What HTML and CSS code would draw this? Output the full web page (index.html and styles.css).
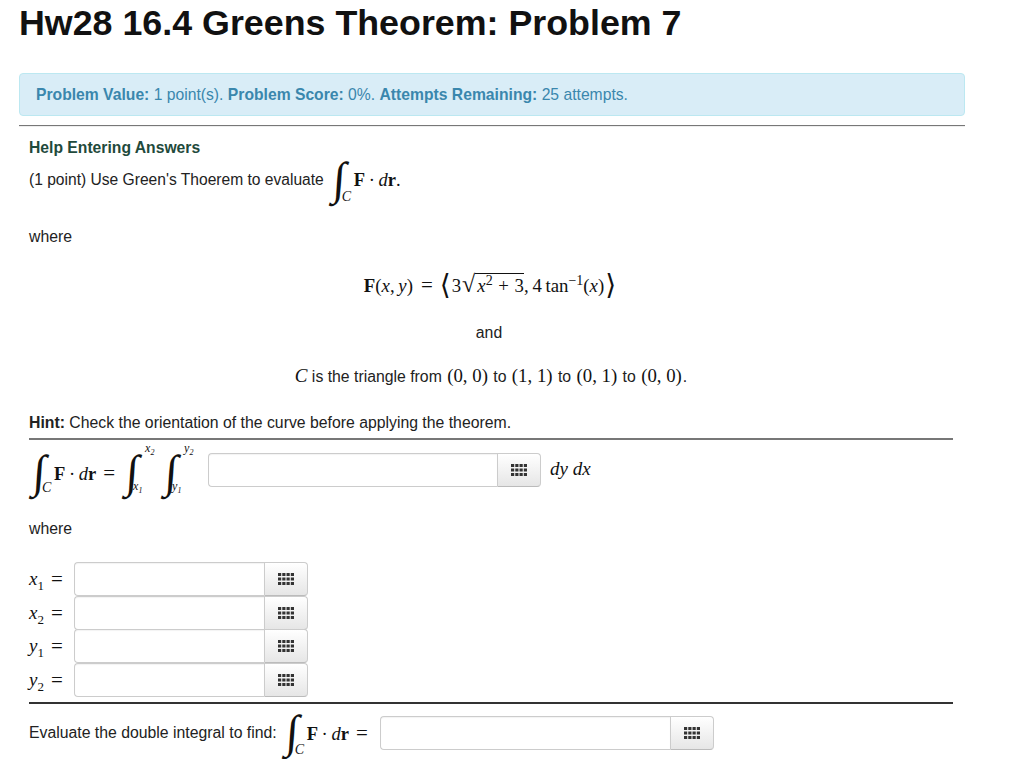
FILE: index.html
```html
<!DOCTYPE html>
<html lang="en">
<head>
<meta charset="utf-8">
<title>Hw28 16.4 Greens Theorem: Problem 7</title>
<link rel="stylesheet" href="styles.css">
</head>
<body>
<svg class="defs" width="0" height="0" aria-hidden="true">
  <symbol id="grid" viewBox="0 0 16 12">
    <path d="M0 0h3.2v3H0zM4.27 0h3.2v3h-3.2zM8.53 0h3.2v3h-3.2zM12.8 0H16v3h-3.2zM0 4.5h3.2v3H0zM4.27 4.5h3.2v3h-3.2zM8.53 4.5h3.2v3h-3.2zM12.8 4.5H16v3h-3.2zM0 9h3.2v3H0zM4.27 9h3.2v3h-3.2zM8.53 9h3.2v3h-3.2zM12.8 9H16v3h-3.2z"/>
  </symbol>
</svg>
<main class="page">
  <h1 class="title">Hw28 16.4 Greens Theorem: Problem 7</h1>
  <div class="alert"><b>Problem Value:</b> 1 point(s). <b>Problem Score:</b> 0%. <b>Attempts Remaining:</b> 25 attempts.</div>
  <hr class="rule-top">
  <section class="problem">
    <a class="help">Help Entering Answers</a>
    <p class="intro"><span>(1 point) Use Green's Thoerem to evaluate</span>
      <span class="math int-wrap"><span class="int">∫</span><i class="low">C</i></span>
      <span class="math expr"><b>F</b> · <i>d</i><b>r</b>.</span></p>
    <p class="where">where</p>
    <p class="formula math"><b>F</b>(<i>x</i>, <i>y</i>)<span class="equals">=</span><span class="angle">⟨</span>3<span class="radical"><span class="root">√</span><span class="radicand"><i>x</i><sup>2</sup> + 3</span></span>, 4 tan<sup>−1</sup>(<i>x</i>)<span class="angle angle-end">⟩</span></p>
    <p class="center and">and</p>
    <p class="center tri"><i class="math big-c">C</i> is the triangle from <span class="math pts">(0, 0)</span> to <span class="math pts">(1, 1)</span> to <span class="math pts">(0, 1)</span> to <span class="math pts">(0, 0)</span>.</p>
    <p class="hint"><b>Hint:</b> Check the orientation of the curve before applying the theorem.</p>
    <hr class="rule">
    <div class="line integral-row">
      <span class="math int-wrap"><span class="int">∫</span><i class="low">C</i></span>
      <span class="math expr"><b>F</b> · <i>d</i><b>r</b><span class="equals-s">=</span></span>
      <span class="math int-wrap limits"><span class="int">∫</span><i class="up">x<sub>2</sub></i><i class="low small">x<sub>1</sub></i></span>
      <span class="math int-wrap limits second"><span class="int">∫</span><i class="up">y<sub>2</sub></i><i class="low small">y<sub>1</sub></i></span>
      <span class="group g-main"><span class="field"></span><span class="btn"><svg class="icon"><use href="#grid"/></svg></span></span>
      <span class="math dydx"><i>dy dx</i></span>
    </div>
    <p class="where where2">where</p>
    <div class="limits-list">
      <div class="limit"><span class="math lbl"><i>x</i><sub>1</sub></span><span class="math eq">=</span><span class="group g-small"><span class="field"></span><span class="btn"><svg class="icon"><use href="#grid"/></svg></span></span></div>
      <div class="limit"><span class="math lbl"><i>x</i><sub>2</sub></span><span class="math eq">=</span><span class="group g-small"><span class="field"></span><span class="btn"><svg class="icon"><use href="#grid"/></svg></span></span></div>
      <div class="limit"><span class="math lbl"><i>y</i><sub>1</sub></span><span class="math eq">=</span><span class="group g-small"><span class="field"></span><span class="btn"><svg class="icon"><use href="#grid"/></svg></span></span></div>
      <div class="limit"><span class="math lbl"><i>y</i><sub>2</sub></span><span class="math eq">=</span><span class="group g-small"><span class="field"></span><span class="btn"><svg class="icon"><use href="#grid"/></svg></span></span></div>
    </div>
    <hr class="rule rule-dark">
    <div class="line final">
      <span>Evaluate the double integral to find:</span>
      <span class="math int-wrap"><span class="int">∫</span><i class="low">C</i></span>
      <span class="math expr"><b>F</b> · <i>d</i><b>r</b><span class="equals-s">=</span></span>
      <span class="group g-main g-final"><span class="field"></span><span class="btn"><svg class="icon"><use href="#grid"/></svg></span></span>
    </div>
  </section>
</main>
</body>
</html>
```
FILE: styles.css
```css
* { box-sizing: border-box; }
html, body { margin: 0; padding: 0; background: #fff; }
body { font-family: "Liberation Sans", Arial, sans-serif; font-size: 15.8px; line-height: 20px; color: #333; height: 759px; overflow: hidden; }
.defs { position: absolute; }
.page { width: 946px; margin-left: 19px; }
.title { margin: 0; padding-top: 1px; height: 73px; font-size: 35.8px; line-height: 44px; font-weight: bold; color: #111; }
.alert { height: 43px; padding: 11px 16px 0; background: #d9edf7; border: 1px solid #bce8f1; border-radius: 4px; color: #3a87ad; font-size: 15.7px; line-height: 20px; }
.rule-top { margin: 9px 0 0; border: 0; border-top: 1px solid #777; border-bottom: 1px solid #eee; height: 2px; }
.problem { padding: 11px 12px 0 10px; }
.help { display: block; font-weight: bold; color: #1f4a3c; font-size: 15.7px; height: 20px; }
p { margin: 0; }
.math { font-family: "Liberation Serif", "Times New Roman", serif; color: #111; }
.intro { display: flex; align-items: center; height: 44px; margin-top: 0; color: #222; font-size: 15.6px; }
.int-wrap { position: relative; display: inline-block; width: 23px; height: 50px; margin-left: 6px; }
.int { position: absolute; left: 3px; top: 0; font-size: 46px; line-height: 48px; transform: skewX(-4deg); }
.low { position: absolute; left: 12px; bottom: 1px; font-size: 14px; line-height: 14px; }
.up { position: absolute; left: 22px; top: -6px; font-size: 12px; line-height: 12px; }
.low.small { font-size: 12px; left: 10px; bottom: 5px; }
.up sub, .low sub { font-size: 8px; line-height: 0; }
.expr { font-size: 18.5px; margin-left: 1px; white-space: pre; word-spacing: -1px; }
.equals-s { font-size: 21px; margin-left: 7px; }
.where { margin-top: 25px; color: #222; }
.formula { margin-top: 17px; height: 40px; line-height: 40px; text-align: center; font-size: 18.8px; word-spacing: -1px; padding-right: 2px; }
.formula sup { font-size: 14px; line-height: 0; }
.equals { font-size: 21px; margin: 0 7px 0 8px; }
.angle { font-family: "DejaVu Sans", serif; font-size: 28px; vertical-align: -2px; margin-right: 1px; }
.angle-end { margin: 0 0 0 1px; }
.radical { white-space: nowrap; }
.root { font-size: 24px; margin-left: 1px; }
.radicand { border-top: 1px solid #111; padding-top: 1px; padding-left: 2px; word-spacing: 1px; }
.center { text-align: center; color: #222; }
.and { margin-top: 19px; padding-right: 4px; }
.tri { margin-top: 23px; }
.big-c { font-size: 19px; }
.pts { font-size: 18.8px; margin: 0 1px; }
.hint { margin-top: 26px; color: #222; }
.rule { margin: 5px 0 0; border: 0; border-top: 2px solid #777; height: 2px; }
.rule-dark { margin: 5px 0 0; border-top-color: #333; }
.line { display: flex; align-items: center; }
.integral-row { margin-top: 7px; height: 52px; }
.integral-row .int-wrap { margin-left: 1px; }
.integral-row .low { bottom: 3px; }
.integral-row .low.small { bottom: 5px; }
.integral-row .limits { width: 34px; margin-left: 8px; }
.integral-row .second { margin-left: 5px; }
.group { display: flex; height: 34px; }
.field { flex: 1; background: #fff; border: 1px solid #ccc; border-right: 0; border-radius: 4px 0 0 4px; box-shadow: inset 0 1px 1px rgba(0,0,0,.05); }
.btn { width: 44px; display: flex; align-items: center; justify-content: center; border: 1px solid #ccc; border-bottom-color: #bbb; border-radius: 0 4px 4px 0; background: linear-gradient(#fff, #e6e6e6); }
.icon { width: 16px; height: 12px; fill: #333; }
.g-main { width: 333px; margin-left: 12px; margin-top: -6px; }
.dydx { font-size: 19px; margin-left: 9px; margin-top: -9px; }
.where2 { margin-top: 20px; }
.limits-list { margin-top: 23px; }
.limit { display: flex; align-items: center; height: 33.7px; }
.lbl { width: 22px; font-size: 19px; }
.lbl sub { font-size: 13px; line-height: 0; }
.eq { font-size: 21px; width: 23px; }
.g-small { width: 234px; height: 34px; }
.final { margin-top: 5px; height: 49px; color: #222; }
.final .int-wrap { margin-left: 6px; }
.g-final { width: 334px; margin-left: 12px; margin-top: 0; }
```
